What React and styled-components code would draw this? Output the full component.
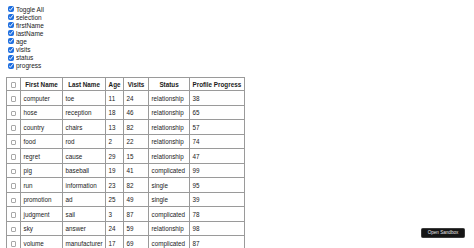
import React, { useState } from 'react'
import styled, { createGlobalStyle } from 'styled-components'

const GlobalStyle = createGlobalStyle`
  html, body {
    margin: 0;
    padding: 0;
    background: #fff;
    font-family: "Liberation Sans", Arial, sans-serif;
    color: #1a1a1a;
  }
`

const Page = styled.div`
  padding: 5px 6px;
`

const ToggleList = styled.div`
  display: flex;
  flex-direction: column;
  margin-bottom: 7px;
`

const ToggleRow = styled.label`
  display: flex;
  align-items: center;
  gap: 2px;
  height: 8.1px;
  font-size: 6.5px;
  padding-left: 2px;
`

const Check = styled.input`
  width: 6px;
  height: 6px;
  margin: 0;
  accent-color: #1f6fe0;
`

const Table = styled.table`
  border-collapse: collapse;
  border: 1px solid #9a9a9a;
  font-size: 6.3px;
`

const Th = styled.th`
  border: 1px solid #9a9a9a;
  height: 12.6px;
  padding: 0 2.5px;
  font-weight: 700;
  text-align: center;
  width: ${({ w }) => w}px;
  white-space: nowrap;
`

const Td = styled.td`
  border: 1px solid #9a9a9a;
  height: 13.5px;
  padding: 0 2.5px;
  white-space: nowrap;
  text-align: ${({ center }) => (center ? 'center' : 'left')};
`

const RowCheck = styled.input`
  appearance: none;
  display: inline-block;
  box-sizing: border-box;
  width: 5.5px;
  height: 5.5px;
  margin: 0;
  vertical-align: middle;
  background: #fff;
  border: 0.7px solid #a8a8a8;
  border-radius: 1px;
`

const SandboxButton = styled.button`
  position: fixed;
  right: 9px;
  bottom: 10px;
  width: 44px;
  height: 10px;
  padding: 0;
  background: #151515;
  color: #e8e8e8;
  border: 1px solid #3a3a3a;
  border-radius: 1.5px;
  font-family: "Liberation Sans", Arial, sans-serif;
  font-size: 4.6px;
  line-height: 1;
`

const toggles = ['Toggle All', 'selection', 'firstName', 'lastName', 'age', 'visits', 'status', 'progress']

const columns = [
  { label: '', w: 8 },
  { label: 'First Name', w: 36 },
  { label: 'Last Name', w: 36 },
  { label: 'Age', w: 11 },
  { label: 'Visits', w: 19 },
  { label: 'Status', w: 35 },
  { label: 'Profile Progress', w: 48 },
]

const rows = [
  ['computer', 'toe', 11, 24, 'relationship', 38],
  ['hose', 'reception', 18, 46, 'relationship', 65],
  ['country', 'chairs', 13, 82, 'relationship', 57],
  ['food', 'rod', 2, 22, 'relationship', 74],
  ['regret', 'cause', 29, 15, 'relationship', 47],
  ['pig', 'baseball', 19, 41, 'complicated', 99],
  ['run', 'information', 23, 82, 'single', 95],
  ['promotion', 'ad', 25, 49, 'single', 39],
  ['judgment', 'sail', 3, 87, 'complicated', 78],
  ['sky', 'answer', 24, 59, 'relationship', 98],
  ['volume', 'manufacturer', 17, 69, 'complicated', 87],
]

export default function App() {
  const [shown, setShown] = useState(() => toggles.map(() => true))

  return (
    <Page>
      <GlobalStyle />
      <ToggleList>
        {toggles.map((t, i) => (
          <ToggleRow key={t}>
            <Check
              type="checkbox"
              checked={shown[i]}
              onChange={() => setShown(s => s.map((v, j) => (j === i ? !v : v)))}
            />
            {t}
          </ToggleRow>
        ))}
      </ToggleList>
      <Table>
        <thead>
          <tr>
            {columns.map((c, i) => (
              <Th key={i} w={c.w}>
                {i === 0 ? <RowCheck type="checkbox" readOnly /> : c.label}
              </Th>
            ))}
          </tr>
        </thead>
        <tbody>
          {rows.map(r => (
            <tr key={r[0]}>
              <Td center>
                <RowCheck type="checkbox" readOnly />
              </Td>
              {r.map((v, i) => (
                <Td key={i}>{v}</Td>
              ))}
            </tr>
          ))}
        </tbody>
      </Table>
      <SandboxButton>Open Sandbox</SandboxButton>
    </Page>
  )
}
